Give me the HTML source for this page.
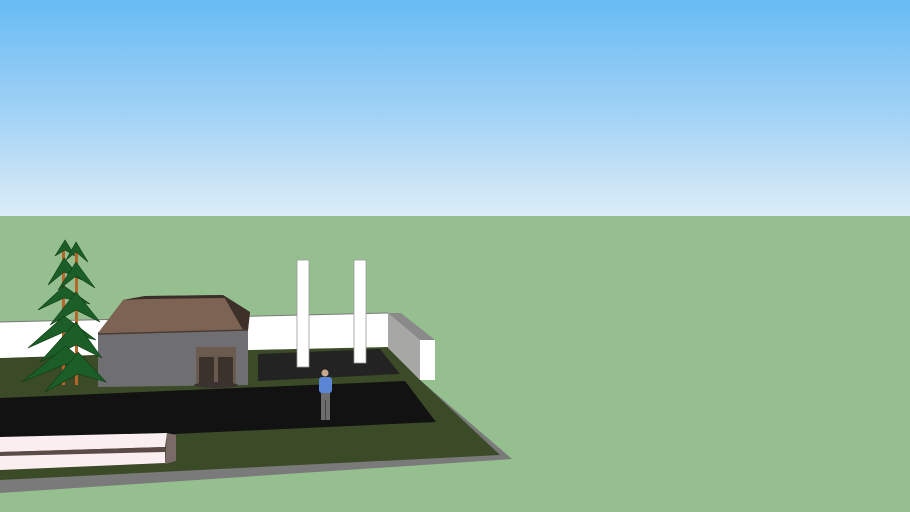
<!DOCTYPE html>
<html><head><meta charset="utf-8"><style>
html,body{margin:0;padding:0;width:910px;height:512px;overflow:hidden}
svg{display:block}
</style></head><body>
<svg width="910" height="512" viewBox="0 0 910 512" xmlns="http://www.w3.org/2000/svg">
<defs>
<linearGradient id="sky" x1="0" y1="0" x2="0" y2="1">
<stop offset="0" stop-color="#67bbf4"/>
<stop offset="0.5" stop-color="#9fd1f5"/>
<stop offset="1" stop-color="#dcedf7"/>
</linearGradient>
</defs>
<rect x="0" y="0" width="910" height="217" fill="url(#sky)"/>
<rect x="0" y="216" width="910" height="296" fill="#95bf8f"/>
<polygon points="0,462 420,380 512,459 0,493" fill="#7a7a7a"/>
<polygon points="0,358 250,350 388,347 418,378 500,455 0,480" fill="#3b4a27"/>
<polygon points="0,322 388,313 388,347 250,350 0,358" fill="#ffffff"/>
<line x1="0" y1="322" x2="388" y2="313" stroke="#777" stroke-width="1"/>
<polygon points="388,313 401,313 435,340 420,340" fill="#8a8a8a"/>
<polygon points="388,313 420,340 420,380 388,348" fill="#a7a7a5"/>
<polygon points="420,340 435,340 435,380 420,380" fill="#ffffff"/>
<polygon points="258,354 380,349 400,374 258,381" fill="#232323"/>
<polygon points="0,398 405,381 436,422 0,442" fill="#121212"/>
<rect x="297" y="260" width="12" height="107" fill="#ffffff" stroke="#999" stroke-width="0.8"/>
<rect x="354" y="260" width="12" height="103" fill="#ffffff" stroke="#999" stroke-width="0.8"/>
<polygon points="0,437 167,433 165,447 0,452" fill="#fbeef0"/>
<polygon points="0,452 165,447 165,452 0,456" fill="#5a4a48"/>
<polygon points="0,456 165,452 165,463 0,470" fill="#fbeef0"/>
<polygon points="167,433 176,435 176,461 165,464" fill="#7a6a68"/>
<polygon points="98,332 248,327 248,385 98,387" fill="#6f6f73"/>
<polygon points="98,333 123,300 145,296 223,295 250,312 248,330 98,334" fill="#7c6354"/>
<polygon points="123,300 145,296 223,295 225,298 145,299" fill="#3a2e28"/>
<polygon points="223,295 250,312 248,330 243,330" fill="#3d3029"/>
<line x1="98" y1="334" x2="248" y2="330" stroke="#4a3c34" stroke-width="1.5"/>
<rect x="196" y="347" width="40" height="36" fill="#6a5a50"/>
<rect x="199" y="357" width="15" height="26" fill="#3b322c"/>
<rect x="218" y="357" width="15" height="26" fill="#3b322c"/>
<ellipse cx="216" cy="385" rx="22" ry="3" fill="#3a3330"/>
<g stroke="#0f3a15" stroke-width="0.6">
<rect x="62" y="245" width="3" height="140" fill="#b5672b" stroke="none"/>
<rect x="75" y="245" width="3" height="140" fill="#b5672b" stroke="none"/>
<g fill="#1c5e27">
<polygon points="65,240 55,256 65,250 75,256"/>
<polygon points="76,242 66,260 76,252 88,262"/>
<polygon points="64,258 48,285 64,272 82,280"/>
<polygon points="76,262 58,290 76,276 95,288"/>
<polygon points="64,286 38,310 64,298 90,304"/>
<polygon points="76,292 50,325 76,310 100,322"/>
<polygon points="64,316 28,348 64,332 96,340"/>
<polygon points="76,322 40,362 76,345 102,358"/>
<polygon points="66,346 22,382 66,364 96,372"/>
<polygon points="78,352 45,392 78,374 106,382"/>
</g>
</g>
<circle cx="325" cy="373" r="3.5" fill="#c9a890"/>
<rect x="319" y="377" width="13" height="16" rx="3" fill="#5b86d6"/>
<rect x="321" y="393" width="9" height="27" fill="#6d6d6d"/>
<line x1="325.5" y1="400" x2="325.5" y2="420" stroke="#444" stroke-width="1"/>
</svg>
</body></html>
